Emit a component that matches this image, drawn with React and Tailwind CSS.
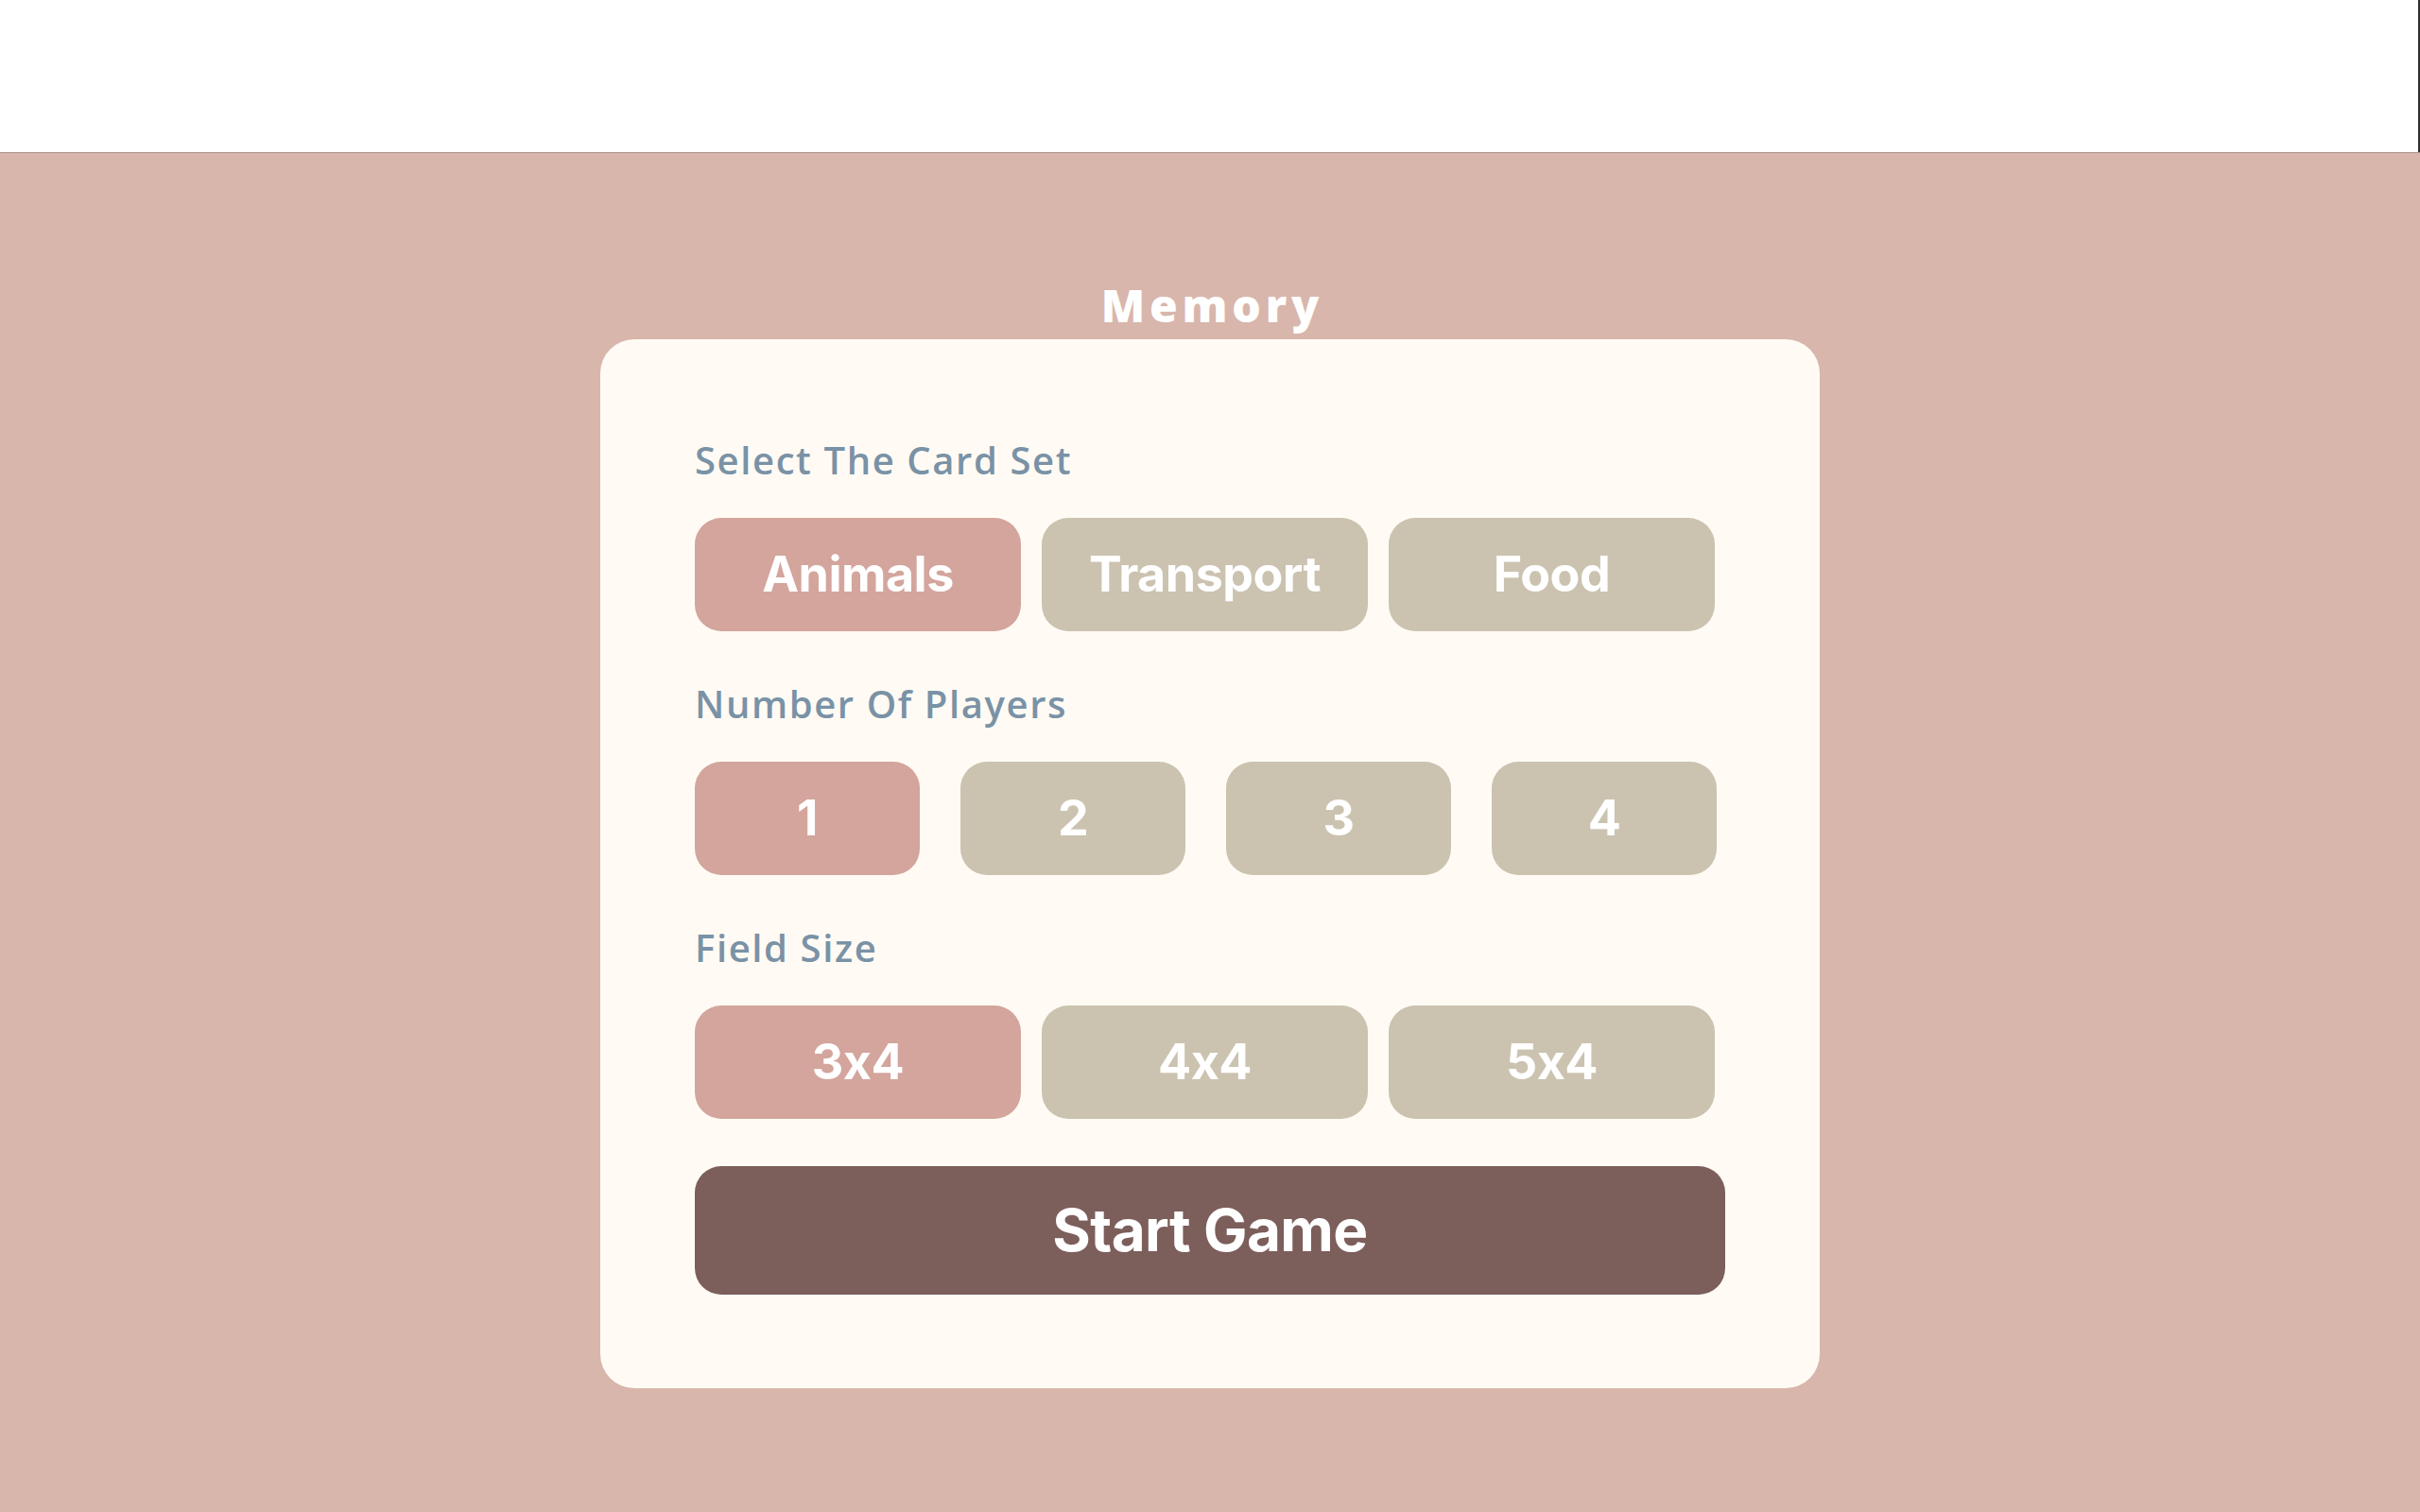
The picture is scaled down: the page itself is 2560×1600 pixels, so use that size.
import { useState } from "react";

const cardSets = ["Animals", "Transport", "Food"];
const players = ["1", "2", "3", "4"];
const fieldSizes = ["3x4", "4x4", "5x4"];

const labelFont = { fontFamily: '"Open Sans", "Liberation Sans", sans-serif' };
const buttonFont = { fontFamily: 'Inter, "Liberation Sans", sans-serif' };

const OptionButton = ({ label, active, onClick, width }) => (
  <button
    onClick={onClick}
    style={buttonFont}
    className={`${width} h-[120px] rounded-[28px] flex items-center justify-center text-[52px] font-bold tracking-[-0.01em] [font-feature-settings:'calt'_0] text-white leading-none cursor-pointer ${
      active ? "bg-[#d3a59c]" : "bg-[#cbc3b0]"
    }`}
  >
    {label}
  </button>
);

const Section = ({ title, className, children }) => (
  <div className={className}>
    <h2
      style={labelFont}
      className="text-[40px] leading-none font-semibold tracking-[0.04em] text-[#7a92a6] mb-[41px]"
    >
      {title}
    </h2>
    {children}
  </div>
);

const App = () => {
  const [cardSet, setCardSet] = useState("Animals");
  const [playerCount, setPlayerCount] = useState("1");
  const [size, setSize] = useState("3x4");

  return (
    <div className="min-h-screen bg-[#d8b6ab] flex flex-col">
      {/* top strip */}
      <div className="h-[162px] bg-white border-b border-[#a8938b]">
        <div className="h-full w-full border-r-2 border-[#2e2e2e]" />
      </div>

      <main className="flex flex-col items-center pt-[137px] pb-[131px]">
        <h1
          style={labelFont}
          className="text-[48px] leading-none font-extrabold tracking-[0.1em] text-white pl-[0.1em] mb-[12px]"
        >
          Memory
        </h1>

        <div className="w-[1290px] bg-[#fffbf4] rounded-[36px] px-[100px] pt-[108px] pb-[99px]">
          <Section title="Select The Card Set">
            <div className="flex gap-[22px]">
              {cardSets.map((s) => (
                <OptionButton
                  key={s}
                  label={s}
                  width="w-[345px]"
                  active={cardSet === s}
                  onClick={() => setCardSet(s)}
                />
              ))}
            </div>
          </Section>

          <Section title="Number Of Players" className="mt-[57px]">
            <div className="flex gap-[43px]">
              {players.map((p) => (
                <OptionButton
                  key={p}
                  label={p}
                  width="w-[238px]"
                  active={playerCount === p}
                  onClick={() => setPlayerCount(p)}
                />
              ))}
            </div>
          </Section>

          <Section title="Field Size" className="mt-[57px]">
            <div className="flex gap-[22px]">
              {fieldSizes.map((f) => (
                <OptionButton
                  key={f}
                  label={f}
                  width="w-[345px]"
                  active={size === f}
                  onClick={() => setSize(f)}
                />
              ))}
            </div>
          </Section>

          <button
            style={buttonFont}
            className="mt-[50px] w-full h-[136px] rounded-[28px] bg-[#7c5e5b] text-white text-[62px] font-bold tracking-[-0.01em] leading-none flex items-center justify-center cursor-pointer"
          >
            Start Game
          </button>
        </div>
      </main>
    </div>
  );
};

export default App;
